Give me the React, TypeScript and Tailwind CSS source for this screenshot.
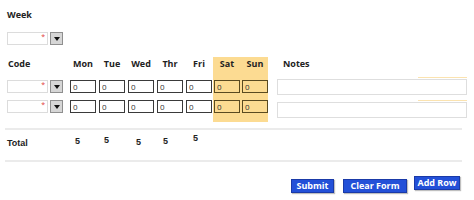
import React from 'react';

const days = ['Mon', 'Tue', 'Wed', 'Thr', 'Fri'];
const weekend = ['Sat', 'Sun'];

const CodeSelect: React.FC = () => (
    <div className="flex items-center h-[13px]">
        <div className="relative w-[41px] h-[13px] border border-[#dcdcdc] bg-white">
            <span className="absolute right-[2px] top-[-1px] text-[7px] leading-[10px] text-[#e23a3a]">*</span>
        </div>
        <div className="ml-[2px] w-[13px] h-[13px] border border-[#8f8f8f] bg-[#d6d6d6] flex items-center justify-center">
            <svg width="6" height="4" viewBox="0 0 6 4"><path d="M0 0h6L3 4z" fill="#111" /></svg>
        </div>
    </div>
);

const DayInput: React.FC<{ weekendCell?: boolean }> = ({ weekendCell }) => (
    <div
        className={`w-[26px] h-[13px] border text-[8px] leading-[11px] pl-[2px] text-[#333] ${weekendCell ? 'border-[#5a4a20] bg-transparent' : 'border-[#3a3a3a] bg-white'}`}
    >
        0
    </div>
);

const DayColumn: React.FC<{ label: string; weekendCell?: boolean }> = ({ label, weekendCell }) => (
    <div className="flex flex-col w-[26px]">
        <div className="h-[14px] text-[9px] leading-[14px] font-bold text-center text-[#222]">{label}</div>
        <div className="mt-[9px]"><DayInput weekendCell={weekendCell} /></div>
        <div className="mt-[7px]"><DayInput weekendCell={weekendCell} /></div>
    </div>
);

const btn = 'h-[14px] bg-[#2350d8] border border-[#1a3aa8] text-white text-[9px] leading-[12px] font-bold shadow-[1px_1px_1px_rgba(0,0,0,0.25)]';

export default function App() {
    return (
        <div className="w-[474px] h-[200px] bg-white overflow-hidden" style={{ fontFamily: '"Open Sans", "Liberation Sans", sans-serif' }}>
            <div className="pt-[9px] pl-[7px]">
                <div className="h-[12px] text-[9px] leading-[12px] font-bold text-[#222]">Week</div>
                <div className="mt-[11px]"><CodeSelect /></div>
            </div>

            <div className="mt-[12px] flex h-[65px]">
                <div className="ml-[7px] w-[56px] flex flex-col">
                    <div className="h-[14px] pl-[1px] text-[9px] leading-[14px] font-bold text-[#222]">Code</div>
                    <div className="mt-[9px]"><CodeSelect /></div>
                    <div className="mt-[7px]"><CodeSelect /></div>
                </div>
                <div className="ml-[7px] flex gap-[3px]">
                    {days.map((d) => <DayColumn key={d} label={d} />)}
                </div>
                <div className="ml-[1px] w-[55px] h-[65px] bg-[#fcdb92] flex gap-[2px] pl-[1px]">
                    {weekend.map((d) => <DayColumn key={d} label={d} weekendCell />)}
                </div>
                <div className="ml-[9px] w-[190px] flex flex-col">
                    <div className="h-[14px] pl-[6px] text-[9px] leading-[14px] font-bold text-[#222]">Notes</div>
                    <div className="mt-[6px] ml-[141px] h-[1px] bg-[#fbe3b0]" />
                    <div className="mt-[1px] h-[16px] border border-[#dedede] bg-white" />
                    <div className="mt-[5px] ml-[141px] h-[1px] bg-[#fbe3b0]" />
                    <div className="mt-[1px] h-[16px] border border-[#dedede] bg-white" />
                </div>
            </div>

            <div className="mt-[6px] ml-[5px] w-[457px] h-[2px] bg-[#ebebeb]" />

            <div className="flex h-[30px] text-[#222]" style={{ fontFamily: '"Liberation Sans", Arial, sans-serif' }}>
                <div className="ml-[7px] w-[68px] mt-[8px] h-[10px] text-[9px] leading-[10px] font-bold">Total</div>
                <div className="w-[29px] mt-[6px] h-[10px] text-[9px] leading-[10px] font-bold">5</div>
                <div className="w-[32px] mt-[5px] h-[10px] text-[9px] leading-[10px] font-bold">5</div>
                <div className="w-[27px] mt-[7px] h-[10px] text-[9px] leading-[10px] font-bold">5</div>
                <div className="w-[30px] mt-[6px] h-[10px] text-[9px] leading-[10px] font-bold">5</div>
                <div className="mt-[3px] h-[10px] text-[9px] leading-[10px] font-bold">5</div>
            </div>

            <div className="ml-[5px] w-[457px] h-[2px] bg-[#ebebeb]" />

            <div className="mt-[14px] flex items-start justify-end pr-[14px]">
                <button className={`mt-[3px] w-[43px] ${btn}`}>Submit</button>
                <button className={`mt-[3px] ml-[9px] w-[64px] ${btn}`}>Clear Form</button>
                <button className={`ml-[7px] w-[46px] ${btn}`}>Add Row</button>
            </div>
        </div>
    );
}
